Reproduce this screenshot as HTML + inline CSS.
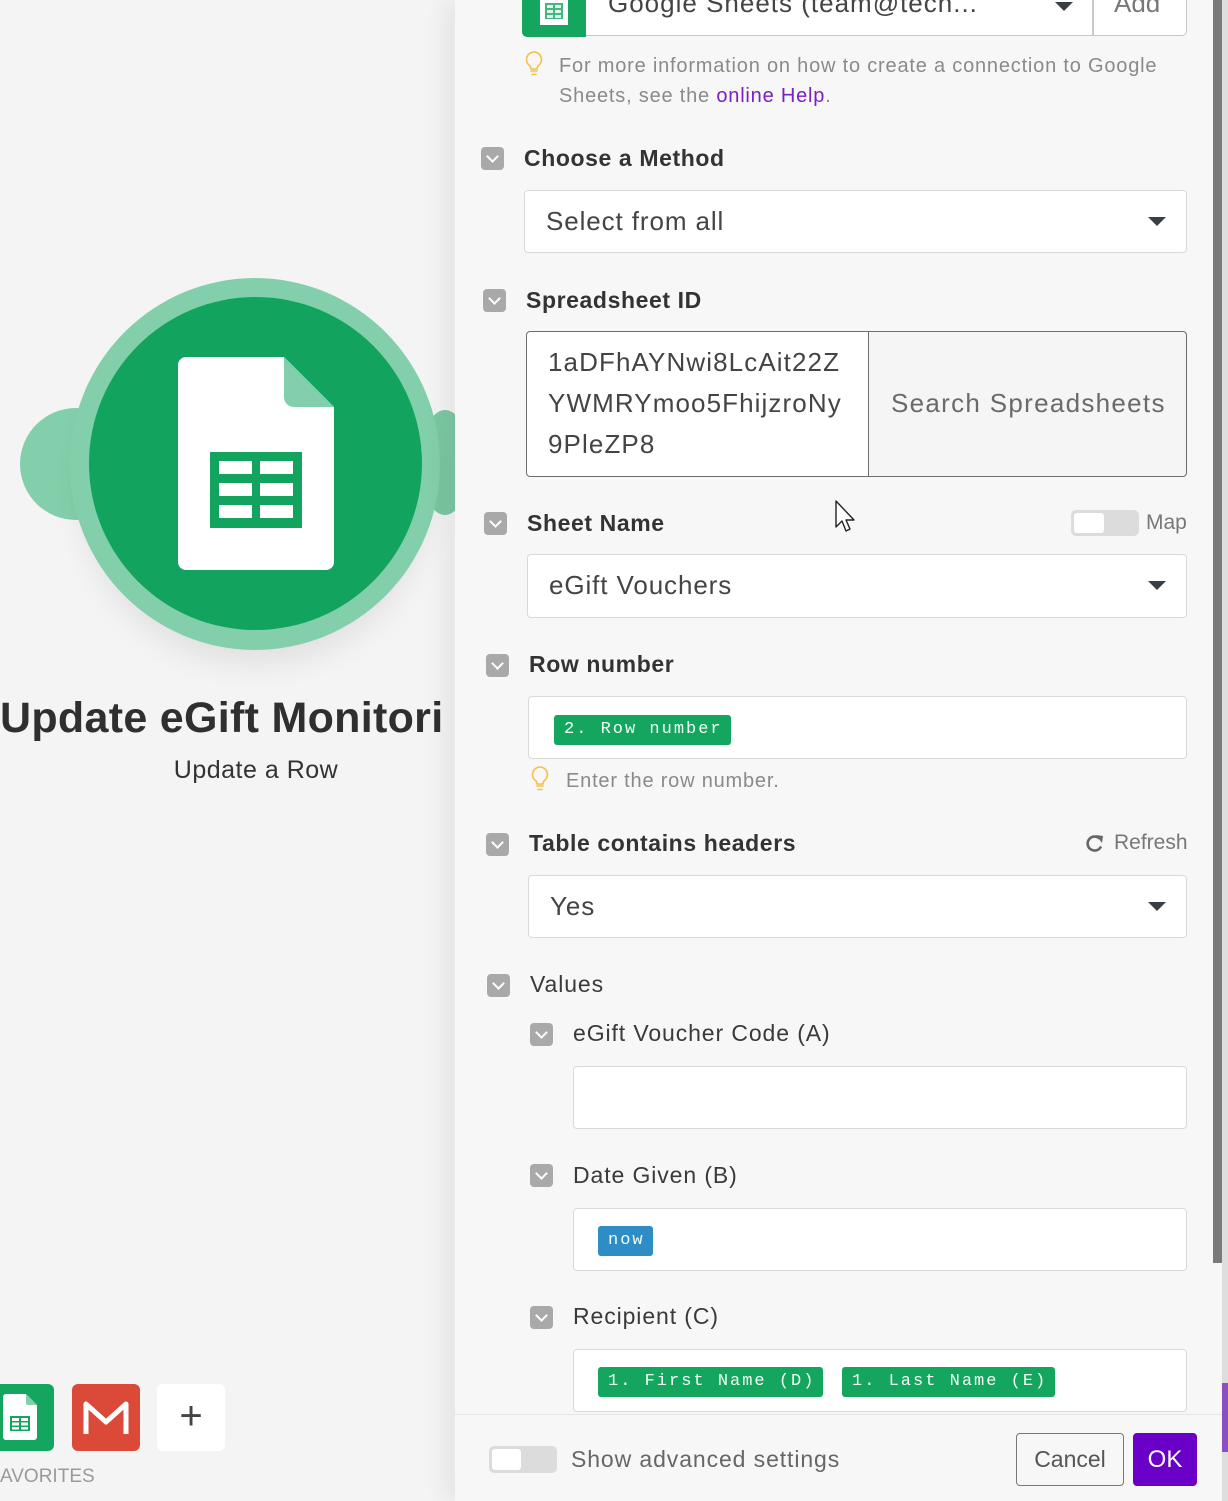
<!DOCTYPE html>
<html><head><meta charset="utf-8"><style>
*{box-sizing:border-box;margin:0;padding:0}
body{width:1228px;height:1501px;overflow:hidden;background:#f4f4f4;position:relative;font-family:"Liberation Sans",sans-serif;color:#333}
.a{position:absolute}
.panel{position:absolute;left:455px;top:0;width:767px;height:1501px;background:#f7f7f7;box-shadow:-12px 0 20px rgba(0,0,0,0.06)}
.cb{position:absolute;width:23px;height:23px;border-radius:4px;background:#a9a9a9}
.cb:after{content:"";position:absolute;left:7px;top:5px;width:7px;height:7px;border-right:2.5px solid #fff;border-bottom:2.5px solid #fff;transform:rotate(45deg)}
.lbl{position:absolute;font-size:23px;font-weight:bold;color:#333;line-height:26px;letter-spacing:0.6px;white-space:nowrap}
.lbn{position:absolute;font-size:23px;color:#3a3a3a;line-height:26px;letter-spacing:0.9px;white-space:nowrap}
.box{position:absolute;background:#fff;border:1.5px solid #d9d9d9;border-radius:4px}
.sel{font-size:26px;color:#444;line-height:60px;padding-left:21px;letter-spacing:0.9px}
.arr{position:absolute;right:20px;top:26px;width:0;height:0;border-left:9px solid transparent;border-right:9px solid transparent;border-top:9px solid #3a3e45}
.pill{position:absolute;background:#14a55f;color:#f0fff5;font-family:"Liberation Mono",monospace;font-size:17px;line-height:30px;border-radius:3px;padding:0 8px 0 10px;white-space:pre;letter-spacing:2px}
.hint{position:absolute;font-size:20px;color:#8a8a8a;line-height:30px;letter-spacing:0.8px}
</style></head><body>
<!-- left canvas -->
<div class="a" style="left:20px;top:408px;width:112px;height:112px;border-radius:50%;background:#84cfab"></div>
<div class="a" style="left:420px;top:410px;width:50px;height:105px;border-radius:50%;background:#7cc9a4"></div>
<div class="a" style="left:70px;top:278px;width:370px;height:372px;border-radius:50%;background:#84cfab;box-shadow:0 25px 30px -10px rgba(0,0,0,0.08)"></div>
<div class="a" style="left:89px;top:297px;width:333px;height:333px;border-radius:50%;background:#12a35f"></div>
<svg class="a" style="left:178px;top:357px" width="157" height="214" viewBox="0 0 157 214">
<path d="M8 0H106L156 50V205a8 8 0 0 1-8 8H8a8 8 0 0 1-8-8V8a8 8 0 0 1 8-8z" fill="#fff"/>
<path d="M106 0L156 50H116a10 10 0 0 1-10-10z" fill="#84cfab"/>
<rect x="32" y="95" width="92" height="76" fill="#12a35f"/>
<g fill="#fff"><rect x="41" y="104" width="33" height="13"/><rect x="82" y="104" width="33" height="13"/><rect x="41" y="126" width="33" height="13"/><rect x="82" y="126" width="33" height="13"/><rect x="41" y="148" width="33" height="13"/><rect x="82" y="148" width="33" height="13"/></g>
</svg>
<div class="a" style="left:0;top:694px;font-size:43px;font-weight:bold;color:#2f2f2f;white-space:nowrap;letter-spacing:0.3px">Update eGift Monitori</div>
<div class="a" style="left:0;width:512px;top:756px;text-align:center;font-size:25px;color:#333;letter-spacing:0.5px">Update a Row</div>
<div class="a" style="left:0;top:1384px;width:54px;height:67px;background:#14a55f;border-radius:0 6px 6px 0"></div>
<svg class="a" style="left:3px;top:1394px" width="34" height="46" viewBox="0 0 34 46"><path d="M3 0H23L34 11V43a3 3 0 0 1-3 3H3a3 3 0 0 1-3-3V3a3 3 0 0 1 3-3z" fill="#fff"/><path d="M23 0L34 11H25a2 2 0 0 1-2-2z" fill="#84cfab"/><rect x="7" y="22" width="20" height="15" fill="#14a55f"/><g fill="#fff"><rect x="9" y="24" width="7" height="3"/><rect x="18" y="24" width="7" height="3"/><rect x="9" y="28.5" width="7" height="3"/><rect x="18" y="28.5" width="7" height="3"/><rect x="9" y="33" width="7" height="2.5"/><rect x="18" y="33" width="7" height="2.5"/></g></svg>
<div class="a" style="left:72px;top:1384px;width:68px;height:67px;background:#db4a39;border-radius:6px"></div>
<svg class="a" style="left:82px;top:1400px" width="48" height="36" viewBox="0 0 48 36"><path d="M4 34V4L24 22L44 4V34" fill="none" stroke="#fff" stroke-width="5" stroke-linejoin="round"/></svg>
<div class="a" style="left:157px;top:1384px;width:68px;height:67px;background:#fff;border-radius:6px;text-align:center;line-height:64px;font-size:40px;color:#444;font-weight:300">+</div>
<div class="a" style="left:0;top:1466px;font-size:19px;color:#9a9a9a">AVORITES</div>

<div class="panel"></div>
<!-- top connection -->
<div class="a" style="left:522px;top:-10px;width:665px;height:46px;border:1.5px solid #c8c8c8;border-radius:0 0 5px 5px;background:#fff"></div>
<div class="a" style="left:522px;top:-10px;width:64px;height:47px;background:#14a55f;border-radius:0 0 0 5px"></div>
<div class="a" style="left:540px;top:-5px;width:28px;height:30px;background:#fff"></div>
<svg class="a" style="left:545px;top:3px" width="18" height="16"><rect width="18" height="16" fill="#14a55f" opacity=".8"/><g fill="#e0f5ea"><rect x="2" y="2" width="6" height="3"/><rect x="10" y="2" width="6" height="3"/><rect x="2" y="7" width="6" height="3"/><rect x="10" y="7" width="6" height="3"/><rect x="2" y="12" width="6" height="3"/><rect x="10" y="12" width="6" height="3"/></g></svg>
<div class="a" style="left:608px;top:-12px;font-size:26px;color:#444;white-space:nowrap;letter-spacing:1px">Google Sheets (team@tech...</div>
<div class="a" style="left:1055px;top:2px;width:0;height:0;border-left:9px solid transparent;border-right:9px solid transparent;border-top:9px solid #3a3e45"></div>
<div class="a" style="left:1092px;top:-10px;width:1.5px;height:46px;background:#c8c8c8"></div>
<div class="a" style="left:1114px;top:-12px;font-size:26px;color:#777">Add</div>
<svg class="a" style="left:524px;top:50px" width="20" height="27" viewBox="0 0 20 27"><path d="M10 2a7.5 7.5 0 0 0-4.5 13.5c1 .9 1.5 2 1.5 3.5h6c0-1.5.5-2.6 1.5-3.5A7.5 7.5 0 0 0 10 2zM7 21h6M8 24.5h4" fill="none" stroke="#f5c04a" stroke-width="1.6" stroke-linecap="round"/></svg>
<div class="hint" style="left:559px;top:51px;width:630px">For more information on how to create a connection to Google Sheets, see the <span style="color:#7a1fc2">online Help</span>.</div>

<div class="cb" style="left:481px;top:147px"></div>
<div class="lbl" style="left:524px;top:145px">Choose a Method</div>
<div class="box sel" style="left:524px;top:190px;width:663px;height:63px">Select from all<div class="arr"></div></div>

<div class="cb" style="left:483px;top:289px"></div>
<div class="lbl" style="left:526px;top:287px">Spreadsheet ID</div>
<div class="box" style="left:526px;top:331px;width:661px;height:146px;background:#f5f5f5;border-color:#6e6e6e"></div>
<div class="a" style="left:527px;top:332px;width:342px;height:144px;background:#fff;border-right:1.5px solid #6e6e6e;border-radius:4px 0 0 4px;font-size:26px;color:#444;line-height:41px;padding:10px 0 0 21px;letter-spacing:1.1px;white-space:nowrap">1aDFhAYNwi8LcAit22Z<br>YWMRYmoo5FhijzroNy<br>9PleZP8</div>
<div class="a" style="left:891px;top:388px;font-size:26px;color:#6a6a6a;letter-spacing:1.3px;white-space:nowrap">Search Spreadsheets</div>

<div class="cb" style="left:484px;top:512px"></div>
<div class="lbl" style="left:527px;top:510px">Sheet Name</div>
<div class="a" style="left:1071px;top:510px;width:68px;height:26px;border-radius:5px;background:#dcdcdc"></div>
<div class="a" style="left:1074px;top:513px;width:30px;height:20px;border-radius:3px;background:#fff"></div>
<div class="a" style="left:1146px;top:511px;font-size:21px;color:#777">Map</div>
<div class="box sel" style="left:527px;top:554px;width:660px;height:64px">eGift Vouchers<div class="arr"></div></div>

<div class="cb" style="left:486px;top:654px"></div>
<div class="lbl" style="left:529px;top:651px">Row number</div>
<div class="box" style="left:528px;top:696px;width:659px;height:63px"></div>
<div class="pill" style="left:554px;top:715px">2. Row number</div>
<svg class="a" style="left:530px;top:765px" width="20" height="27" viewBox="0 0 20 27"><path d="M10 2a7.5 7.5 0 0 0-4.5 13.5c1 .9 1.5 2 1.5 3.5h6c0-1.5.5-2.6 1.5-3.5A7.5 7.5 0 0 0 10 2zM7 21h6M8 24.5h4" fill="none" stroke="#f5c04a" stroke-width="1.6" stroke-linecap="round"/></svg>
<div class="hint" style="left:566px;top:766px">Enter the row number.</div>

<div class="cb" style="left:486px;top:833px"></div>
<div class="lbl" style="left:529px;top:830px">Table contains headers</div>
<svg class="a" style="left:1084px;top:833px" width="22" height="22" viewBox="0 0 22 22"><path d="M17 13.5A7 7 0 1 1 15.5 5.5" fill="none" stroke="#666" stroke-width="2.6"/><path d="M12 2L19 3L18 10z" fill="#666"/></svg>
<div class="a" style="left:1114px;top:831px;font-size:21px;color:#777">Refresh</div>
<div class="box sel" style="left:528px;top:875px;width:659px;height:63px">Yes<div class="arr"></div></div>

<div class="cb" style="left:487px;top:974px"></div>
<div class="lbn" style="left:530px;top:971px">Values</div>
<div class="cb" style="left:530px;top:1023px"></div>
<div class="lbn" style="left:573px;top:1020px">eGift Voucher Code (A)</div>
<div class="box" style="left:573px;top:1066px;width:614px;height:63px"></div>
<div class="cb" style="left:530px;top:1164px"></div>
<div class="lbn" style="left:573px;top:1162px">Date Given (B)</div>
<div class="box" style="left:573px;top:1208px;width:614px;height:63px"></div>
<div class="pill" style="left:598px;top:1226px;background:#2d8dc4">now</div>
<div class="cb" style="left:530px;top:1306px"></div>
<div class="lbn" style="left:573px;top:1303px">Recipient (C)</div>
<div class="box" style="left:573px;top:1349px;width:614px;height:63px"></div>
<div class="pill" style="left:598px;top:1367px">1. First Name (D)</div>
<div class="pill" style="left:842px;top:1367px">1. Last Name (E)</div>

<!-- footer -->
<div class="a" style="left:455px;top:1414px;width:767px;height:87px;background:#f7f7f7;border-top:1px solid #e6e6e6"></div>
<div class="a" style="left:489px;top:1446px;width:68px;height:27px;border-radius:5px;background:#dcdcdc"></div>
<div class="a" style="left:492px;top:1449px;width:29px;height:21px;border-radius:3px;background:#fff"></div>
<div class="a" style="left:571px;top:1446px;font-size:23px;color:#666;letter-spacing:0.9px">Show advanced settings</div>
<div class="a" style="left:1016px;top:1433px;width:108px;height:53px;border:1.5px solid #777;border-radius:4px;font-size:23px;color:#555;text-align:center;line-height:50px">Cancel</div>
<div class="a" style="left:1133px;top:1433px;width:64px;height:53px;background:#6a00c8;border-radius:4px;font-size:24px;color:#fff;text-align:center;line-height:53px">OK</div>

<!-- scrollbar -->
<div class="a" style="left:1222px;top:0;width:6px;height:1501px;background:#dedede"></div>
<div class="a" style="left:1213px;top:0;width:9px;height:1263px;background:#7a7a7a"></div>
<div class="a" style="left:1222px;top:1383px;width:6px;height:69px;background:#8a4fc0"></div>
<svg class="a" style="left:835px;top:500px" width="24" height="36" viewBox="0 0 24 36"><path d="M1 1V27L7 21L11 31L15 29L11 20H19z" fill="#fff" stroke="#222" stroke-width="1.4" stroke-linejoin="round"/></svg>
</body></html>
